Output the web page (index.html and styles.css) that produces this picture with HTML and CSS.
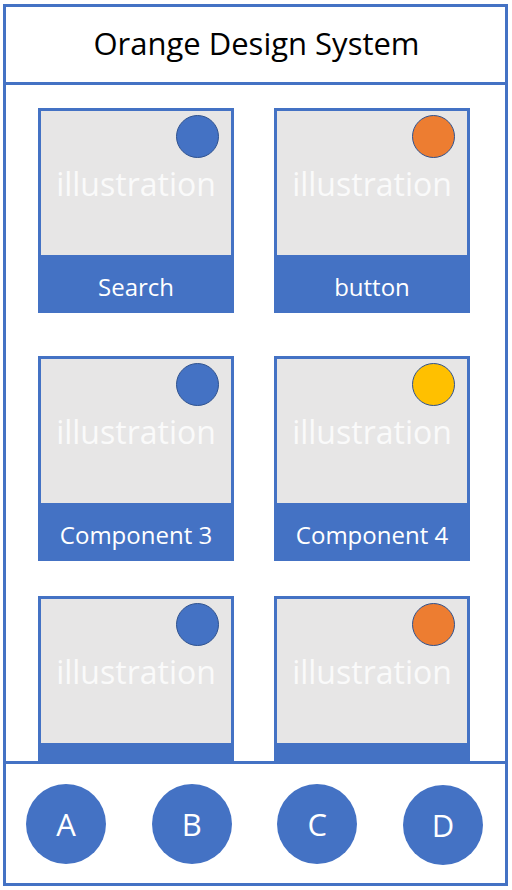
FILE: index.html
```html
<!DOCTYPE html>
<html lang="en">
<head>
<meta charset="utf-8">
<title>Orange Design System</title>
<link rel="stylesheet" href="styles.css">
</head>
<body>
<div class="frame">
  <header class="header">
    <h1 class="title">Orange Design System</h1>
  </header>
  <main class="content">
    <div class="card-row">
      <div class="card">
        <div class="card-illustration">illustration<span class="dot dot--blue"></span></div>
        <div class="card-label">Search</div>
      </div>
      <div class="card">
        <div class="card-illustration">illustration<span class="dot dot--orange"></span></div>
        <div class="card-label">button</div>
      </div>
    </div>
    <div class="card-row card-row--second">
      <div class="card">
        <div class="card-illustration">illustration<span class="dot dot--blue"></span></div>
        <div class="card-label">Component 3</div>
      </div>
      <div class="card">
        <div class="card-illustration">illustration<span class="dot dot--yellow"></span></div>
        <div class="card-label">Component 4</div>
      </div>
    </div>
    <div class="card-row card-row--third">
      <div class="card">
        <div class="card-illustration">illustration<span class="dot dot--blue"></span></div>
        <div class="card-label"></div>
      </div>
      <div class="card">
        <div class="card-illustration">illustration<span class="dot dot--orange"></span></div>
        <div class="card-label"></div>
      </div>
    </div>
  </main>
  <nav class="nav">
    <span class="nav-item">A</span>
    <span class="nav-item">B</span>
    <span class="nav-item">C</span>
    <span class="nav-item nav-item--low">D</span>
  </nav>
</div>
</body>
</html>
```

FILE: styles.css
```css
* {
  box-sizing: border-box;
}

html, body {
  margin: 0;
  padding: 0;
  background: #ffffff;
}

body {
  font-family: "Open Sans", "Noto Sans", "Liberation Sans", sans-serif;
}

.frame {
  margin: 4px 0 0 3px;
  width: 505px;
  height: 882px;
  border: 3px solid #4472c4;
  display: flex;
  flex-direction: column;
}

.header {
  height: 78px;
  flex: none;
  border-bottom: 3px solid #4472c4;
  display: flex;
  align-items: center;
  justify-content: center;
}

.title {
  margin: 0 0 0 2px;
  font-size: 31px;
  font-weight: 400;
  color: #000000;
  line-height: 1;
  padding-bottom: 2px;
}

.content {
  flex: 1;
  overflow: hidden;
  padding: 23px 0 0 32px;
  display: flex;
  flex-direction: column;
}

.card-row {
  display: flex;
  gap: 40px;
  flex: none;
}

.card-row--second {
  margin-top: 43px;
}

.card-row--third {
  margin-top: 35px;
}

.card {
  width: 196px;
  height: 205px;
  border: 3px solid #4472c4;
  display: flex;
  flex-direction: column;
  flex: none;
}

.card-illustration {
  position: relative;
  height: 144px;
  flex: none;
  background: #e7e6e6;
  color: #fafafa;
  font-size: 32px;
  display: flex;
  align-items: center;
  justify-content: center;
}

.dot {
  position: absolute;
  top: 4px;
  right: 12px;
  width: 43px;
  height: 43px;
  border-radius: 50%;
  border: 1.5px solid #2f528f;
}

.dot--blue {
  background: #4472c4;
}

.dot--orange {
  background: #ed7d31;
}

.dot--yellow {
  background: #ffc000;
}

.card-label {
  flex: 1;
  background: #4472c4;
  color: #ffffff;
  font-size: 24px;
  display: flex;
  align-items: center;
  justify-content: center;
  padding-top: 7px;
}

.nav {
  height: 122px;
  flex: none;
  border-top: 3px solid #4472c4;
  display: flex;
  align-items: center;
  justify-content: space-between;
  padding: 0 22px 0 20px;
}

.nav-item {
  width: 80px;
  height: 80px;
  border-radius: 50%;
  background: #4472c4;
  color: #ffffff;
  font-size: 31px;
  display: flex;
  align-items: center;
  justify-content: center;
}

.nav-item--low {
  margin-top: 3px;
}
```
